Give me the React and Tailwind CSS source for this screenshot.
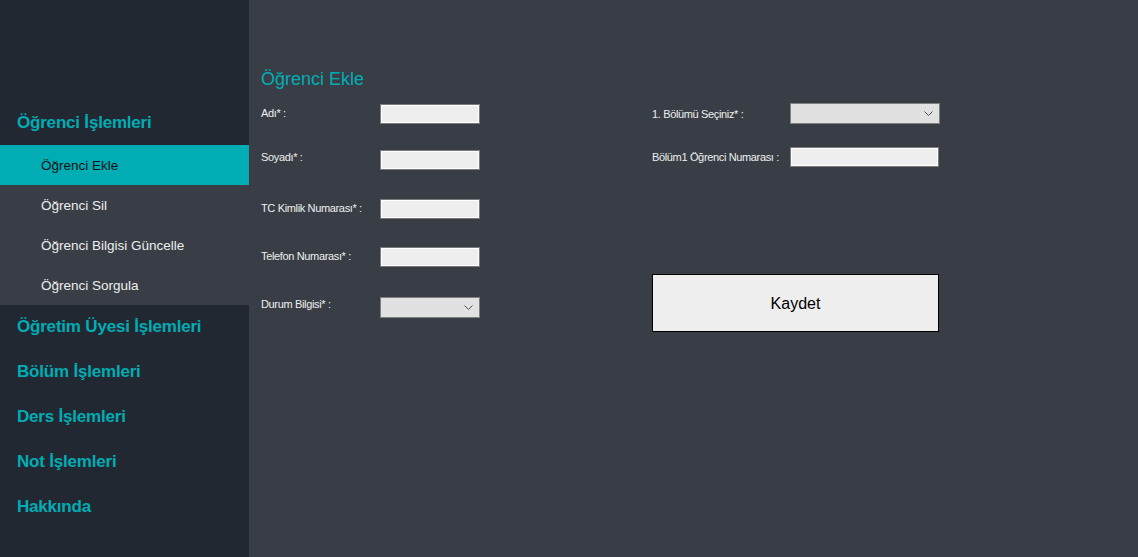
import React from "react";

const font = { fontFamily: '"Liberation Sans", Arial, sans-serif' };

function TextBox({ w = "w-[100px]" }) {
  return (
    <div className={`${w} h-[20px] border border-[#7a7a7a] bg-[#eeeeee] shadow-[inset_0_0_0_1px_#ffffff]`} />
  );
}

function Select({ w = "w-[100px]", h = "h-[21px]" }) {
  return (
    <div className={`${w} ${h} border border-[#7f7f7f] bg-[#e1e1e1] flex items-center justify-end pr-[6px]`}>
      <svg width="9" height="5" viewBox="0 0 9 5" className="block">
        <path d="M0.5 0.5 L4.5 4.5 L8.5 0.5" fill="none" stroke="#505050" strokeWidth="1" />
      </svg>
    </div>
  );
}

const labelCls = "text-[11px] leading-[13px] text-[#eeeeee] tracking-[-0.35px]";

function Row({ label, mt, labelPt, children }) {
  return (
    <div className={`flex items-start ${mt}`}>
      <div className={`w-[119px] ${labelCls} ${labelPt}`}>{label}</div>
      {children}
    </div>
  );
}

export default function App() {
  const subs = ["Öğrenci Ekle", "Öğrenci Sil", "Öğrenci Bilgisi Güncelle", "Öğrenci Sorgula"];
  const mains = ["Öğretim Üyesi İşlemleri", "Bölüm İşlemleri", "Ders İşlemleri", "Not İşlemleri", "Hakkında"];
  return (
    <div className="flex w-[1138px] h-[557px] bg-[#393e46] overflow-hidden" style={font}>
      <aside className="w-[249px] shrink-0 bg-[#222831] flex flex-col">
        <div className="h-[100px]" />
        <div className="h-[45px] flex items-center pl-[17px] text-[#00adb5] text-[17px] font-bold tracking-[-0.2px]">
          Öğrenci İşlemleri
        </div>
        <div className="bg-[#393e46] flex flex-col">
          {subs.map((s, i) => (
            <div
              key={s}
              className={`h-[40px] flex items-center pl-[41px] pt-[2px] text-[13.5px] ${
                i === 0 ? "bg-[#00adb5] text-[#111111]" : "text-[#eeeeee]"
              }`}
            >
              {s}
            </div>
          ))}
        </div>
        {mains.map((m) => (
          <div
            key={m}
            className="h-[45px] flex items-center pl-[17px] pb-[2px] text-[#00adb5] text-[17px] font-bold tracking-[-0.2px]"
          >
            {m}
          </div>
        ))}
      </aside>

      <main className="flex-1 pl-[12px] pt-[67px]">
        <div className="text-[18px] leading-[23px] text-[#00adb5] pt-[1px]">Öğrenci Ekle</div>
        <div className="flex mt-[13px]">
          <div className="w-[391px] flex flex-col">
            <Row label="Adı* :" mt="mt-0" labelPt="pt-[3px]">
              <TextBox />
            </Row>
            <Row label="Soyadı* :" mt="mt-[26px]" labelPt="pt-[1px]">
              <TextBox />
            </Row>
            <Row label="TC Kimlik Numarası* :" mt="mt-[29px]" labelPt="pt-[3px]">
              <TextBox />
            </Row>
            <Row label="Telefon Numarası* :" mt="mt-[28px]" labelPt="pt-[3px]">
              <TextBox />
            </Row>
            <Row label="Durum Bilgisi* :" mt="mt-[30px]" labelPt="pt-[1px]">
              <Select />
            </Row>
          </div>
          <div className="flex flex-col -mt-[1px]">
            <div className="flex items-start">
              <div className={`w-[138px] ${labelCls} pt-[5px]`}>1. Bölümü Seçiniz* :</div>
              <Select w="w-[150px]" />
            </div>
            <div className="flex items-start mt-[23px]">
              <div className={`w-[138px] ${labelCls} pt-[4px]`}>Bölüm1 Öğrenci Numarası :</div>
              <TextBox w="w-[149px]" />
            </div>
            <button className="mt-[107px] w-[287px] h-[58px] border border-black bg-[#eeeeee] text-[16px] text-black flex items-center justify-center pt-[2px]">
              Kaydet
            </button>
          </div>
        </div>
      </main>
    </div>
  );
}
